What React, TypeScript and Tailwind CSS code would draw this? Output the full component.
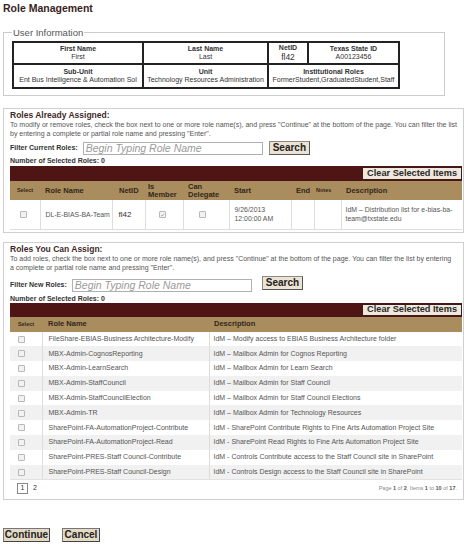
const assignable = [
  ["FileShare-EBIAS-Business Architecture-Modify", "IdM – Modify access to EBIAS Business Architecture folder"],
  ["MBX-Admin-CognosReporting", "IdM – Mailbox Admin for Cognos Reporting"],
  ["MBX-Admin-LearnSearch", "IdM – Mailbox Admin for Learn Search"],
  ["MBX-Admin-StaffCouncil", "IdM – Mailbox Admin for Staff Council"],
  ["MBX-Admin-StaffCouncilElection", "IdM – Mailbox Admin for Staff Council Elections"],
  ["MBX-Admin-TR", "IdM – Mailbox Admin for Technology Resources"],
  ["SharePoint-FA-AutomationProject-Contribute", "IdM - SharePoint Contribute Rights to Fine Arts Automation Project Site"],
  ["SharePoint-FA-AutomationProject-Read", "IdM - SharePoint Read Rights to Fine Arts Automation Project Site"],
  ["SharePoint-PRES-Staff Council-Contribute", "IdM - Controls Contribute access to the Staff Council site in SharePoint"],
  ["SharePoint-PRES-Staff Council-Design", "IdM - Controls Design access to the Staff Council site in SharePoint"],
];

function Check({ checked }: { checked?: boolean }) {
  return (
    <span className="inline-flex w-[7px] h-[7px] border border-[#b8b8b8] rounded-[1px] bg-[#f2f2f2] items-center justify-center align-middle">
      {checked && (
        <svg viewBox="0 0 8 8" className="w-[6px] h-[6px]">
          <path d="M1.5 4.2 3.2 5.8 6.5 2" stroke="#9a9a9a" strokeWidth="1.2" fill="none" />
        </svg>
      )}
    </span>
  );
}

function FilterRow({
  label,
  gap,
  inputTop,
}: {
  label: string;
  gap: string;
  inputTop: string;
}) {
  return (
    <div className={`flex items-start ${gap}`}>
      <div className={`flex items-center ${inputTop}`}>
        <span className="text-[7px] font-bold text-[#333] mr-[5px] whitespace-nowrap">{label}</span>
        <div className="w-[180px] h-[13px] border border-[#b0b0b0] bg-white flex items-center pl-[2px]">
          <span className="text-[10.5px] italic text-[#9a9a9a] leading-none whitespace-nowrap">Begin Typing Role Name</span>
        </div>
      </div>
      <button className="h-[14px] px-[3px] bg-[#ece3d3] border border-[#8a8a8a] border-b-[#555] border-r-[#555] text-[10px] font-bold text-[#222] leading-none">
        Search
      </button>
    </div>
  );
}

function ClearBar({ height }: { height: string }) {
  return (
    <div className={`${height} bg-[#4f1515] flex justify-end items-center`}>
      <button className="h-[calc(100%-2px)] px-[4px] bg-[#efe8dc] border border-[#3a1a1a] text-[9.2px] font-bold text-[#2a2a2a] leading-none">
        Clear Selected Items
      </button>
    </div>
  );
}

export default function App() {
  return (
    <div className="w-[474px] h-[544px] bg-white overflow-hidden pt-[2px] pl-[3px] font-['Liberation_Sans',Arial,sans-serif] text-[#555]">
      <h1 className="text-[10.5px] font-bold text-[#3a1e1e] leading-[13px]">Role Management</h1>

      {/* User information */}
      <fieldset className="mt-[12px] w-[442px] border border-[#cccccc] pl-[8px] pb-[6px]">
        <legend className="px-[1px] text-[9.5px] leading-[11px] text-[#555]">User Information</legend>
        <table className="mt-[3px] w-[386px] table-fixed border-collapse text-[7px] leading-[8.5px] text-[#333]">
          <colgroup>
            <col className="w-[130px]" />
            <col className="w-[125px]" />
            <col className="w-[40px]" />
            <col className="w-[91px]" />
          </colgroup>
          <tbody>
            <tr className="h-[22px]">
              <td className="border-2 border-[#222] text-center">
                <div className="font-bold">First Name</div>
                <div>First</div>
              </td>
              <td className="border-2 border-[#222] text-center">
                <div className="font-bold">Last Name</div>
                <div>Last</div>
              </td>
              <td className="border-2 border-[#222] text-center">
                <div className="font-bold">NetID</div>
                <div className="text-[8.5px] leading-[9px]">fl42</div>
              </td>
              <td className="border-2 border-[#222] text-center">
                <div className="font-bold">Texas State ID</div>
                <div>A00123456</div>
              </td>
            </tr>
            <tr className="h-[24px]">
              <td className="border-2 border-[#222] text-center whitespace-nowrap">
                <div className="font-bold">Sub-Unit</div>
                <div>Ent Bus Intelligence &amp; Automation Sol</div>
              </td>
              <td className="border-2 border-[#222] text-center whitespace-nowrap">
                <div className="font-bold">Unit</div>
                <div>Technology Resources Administration</div>
              </td>
              <td colSpan={2} className="border-2 border-[#222] text-center whitespace-nowrap">
                <div className="font-bold">Institutional Roles</div>
                <div>FormerStudent,GraduatedStudent,Staff</div>
              </td>
            </tr>
          </tbody>
        </table>
      </fieldset>

      {/* Roles already assigned */}
      <section className="mt-[12px] w-[461px] border border-[#cfcfcf] pl-[6px] pr-[2px] pt-[1px] pb-[2px]">
        <h2 className="text-[8.5px] font-bold text-[#3f2a2a] leading-[10px]">Roles Already Assigned:</h2>
        <p className="text-[7px] leading-[9px] text-[#555] pr-[4px]">
          To modify or remove roles, check the box next to one or more role name(s), and press "Continue" at the bottom of the page. You can filter the list by entering a complete or partial role name and pressing "Enter".
        </p>
        <div className="mt-[3px]">
          <FilterRow label="Filter Current Roles:" gap="gap-[6px]" inputTop="mt-[1px]" />
        </div>
        <div className="mt-[2px] text-[7px] font-bold text-[#333] leading-[8px]">Number of Selected Roles: 0</div>
        <div className="mt-[1px] w-[452px]">
          <ClearBar height="h-[15px]" />
          <table className="w-[452px] table-fixed border-collapse">
            <colgroup>
              <col className="w-[30px]" />
              <col className="w-[72px]" />
              <col className="w-[33px]" />
              <col className="w-[38px]" />
              <col className="w-[46px]" />
              <col className="w-[62px]" />
              <col className="w-[23px]" />
              <col className="w-[27px]" />
              <col className="w-[121px]" />
            </colgroup>
            <thead>
              <tr className="h-[19px] bg-[#a98d5e] text-[#33261a] text-left align-middle">
                <th className="text-[5.5px] font-bold text-center">Select</th>
                <th className="text-[7.5px] font-bold pl-[5px]">Role Name</th>
                <th className="text-[7.5px] font-bold pl-[7px]">NetID</th>
                <th className="text-[7.5px] font-bold pl-[3px] leading-[8px]">Is<br />Member</th>
                <th className="text-[7.5px] font-bold pl-[5px] leading-[8px]">Can<br />Delegate</th>
                <th className="text-[7.5px] font-bold pl-[5px]">Start</th>
                <th className="text-[7.5px] font-bold pl-[5px]">End</th>
                <th className="text-[5.5px] font-bold pl-[2px]">Notes</th>
                <th className="text-[7.5px] font-bold pl-[5px]">Description</th>
              </tr>
            </thead>
            <tbody>
              <tr className="h-[29px] text-[6.9px] leading-[9px] text-[#555] border-b border-[#dddddd]">
                <td className="pl-[10px] border-r border-[#dddddd]"><Check /></td>
                <td className="pl-[5px] border-r border-[#dddddd] whitespace-nowrap">DL-E-BIAS-BA-Team</td>
                <td className="pl-[6px] border-r border-[#dddddd] text-[8px] text-[#333]">fl42</td>
                <td className="pl-[13px] border-r border-[#dddddd]"><Check checked /></td>
                <td className="pl-[15px] border-r border-[#dddddd]"><Check /></td>
                <td className="pl-[5px] border-r border-[#dddddd] whitespace-nowrap">9/26/2013<br />12:00:00 AM</td>
                <td className="border-r border-[#dddddd]"></td>
                <td className="border-r border-[#dddddd]"></td>
                <td className="pl-[4px] whitespace-nowrap">IdM – Distribution list for e-bias-ba-<br />team@txstate.edu</td>
              </tr>
            </tbody>
          </table>
        </div>
      </section>

      {/* Roles you can assign */}
      <section className="mt-[9px] w-[461px] border border-[#cfcfcf] pl-[6px] pr-[2px] pt-[1px] pb-[3px]">
        <h2 className="text-[8.5px] font-bold text-[#3f2a2a] leading-[10px]">Roles You Can Assign:</h2>
        <p className="text-[7px] leading-[9px] text-[#555] pr-[6px]">
          To add roles, check the box next to one or more role name(s), and press "Continue" at the bottom of the page. You can filter the list by entering a complete or partial role name and pressing "Enter".
        </p>
        <div className="mt-[4px]">
          <FilterRow label="Filter New Roles:" gap="gap-[10px]" inputTop="mt-[3px]" />
        </div>
        <div className="mt-[3px] text-[7px] font-bold text-[#333] leading-[8px]">Number of Selected Roles: 0</div>
        <div className="w-[452px]">
          <ClearBar height="h-[14px]" />
          <table className="w-[452px] table-fixed border-collapse">
            <colgroup>
              <col className="w-[32px]" />
              <col className="w-[167px]" />
              <col className="w-[253px]" />
            </colgroup>
            <thead>
              <tr className="h-[15px] bg-[#a98d5e] text-[#33261a] text-left">
                <th className="text-[5.5px] font-bold text-center">Select</th>
                <th className="text-[7.5px] font-bold pl-[6px]">Role Name</th>
                <th className="text-[7.5px] font-bold pl-[5px]">Description</th>
              </tr>
            </thead>
            <tbody>
              {assignable.map(([name, desc], i) => (
                <tr
                  key={name}
                  className={`h-[14.8px] text-[7px] leading-[8px] text-[#555] ${i % 2 === 1 ? "bg-[#f1f1f1]" : "bg-white"}`}
                >
                  <td className="pl-[8px] border-r border-[#dddddd]"><Check /></td>
                  <td className="pl-[6px] border-r border-[#dddddd] whitespace-nowrap">{name}</td>
                  <td className="pl-[4px] whitespace-nowrap">{desc}</td>
                </tr>
              ))}
            </tbody>
          </table>
          <div className="h-[17px] flex items-center border-t border-[#e2e2e2] pl-[7px] pr-[5px]">
            <span className="w-[11px] h-[11px] border border-[#888] flex items-center justify-center text-[7px] text-[#333]">1</span>
            <span className="ml-[5px] text-[7px] text-[#333]">2</span>
            <span className="ml-auto text-[5.5px] text-[#888]">
              Page <b className="text-[#555]">1</b> of <b className="text-[#555]">2</b>, Items <b className="text-[#555]">1</b> to <b className="text-[#555]">10</b> of <b className="text-[#555]">17</b>.
            </span>
          </div>
        </div>
      </section>

      <div className="mt-[28px] flex gap-[12px]">
        <button className="h-[14px] w-[47px] bg-[#e3d9c5] border border-[#777] border-b-[#444] border-r-[#444] text-[10px] font-bold text-[#222] leading-none">
          Continue
        </button>
        <button className="h-[14px] w-[38px] bg-[#e3d9c5] border border-[#777] border-b-[#444] border-r-[#444] text-[10px] font-bold text-[#222] leading-none">
          Cancel
        </button>
      </div>
    </div>
  );
}
